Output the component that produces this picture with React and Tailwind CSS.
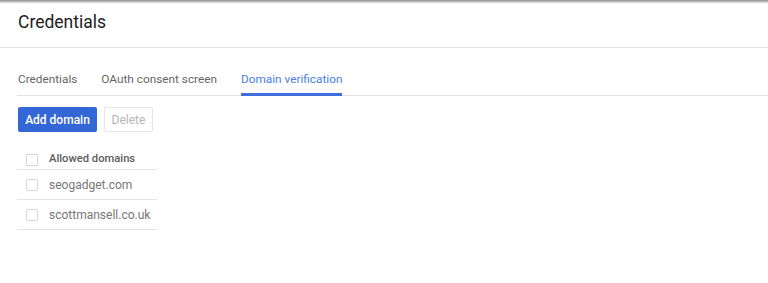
const Checkbox = () => (
  <span className="block w-[12px] h-[12px] border border-[#d9d9d9] rounded-[1px] bg-white" />
)

const Row = ({ children, header }) => (
  <div className={`flex items-center border-b border-[#e4e4e4] ${header ? 'h-[23px] pt-[3px]' : 'h-[30px]'}`}>
    <div className="w-[32px] pl-[9px]">
      <Checkbox />
    </div>
    <span className={header ? 'text-[11.2px] font-medium text-[#5c5c5c]' : 'text-[12px] text-[#777777]'}>{children}</span>
  </div>
)

export default function App() {
  const tabs = ['Credentials', 'OAuth consent screen', 'Domain verification']
  return (
    <div className="w-[768px] h-[283px] bg-white overflow-hidden" style={{ fontFamily: 'Roboto, "Liberation Sans", sans-serif' }}>
      <div className="h-[3px] bg-gradient-to-b from-[#8f8f8f] to-[#e6e6e6]" />
      <div className="h-[45px] flex items-center px-[18px] border-b border-[#e2e2e2]">
        <h1 className="text-[17.5px] text-[#222222] leading-none pb-[5px]">Credentials</h1>
      </div>

      <div className="ml-[17px] pt-[20px] flex gap-[24px] border-b border-[#e2e2e2]">
        {tabs.map((t, i) => (
          <div key={t}
            className={`h-[28px] flex items-start pt-[3px] text-[11.8px] -mb-px border-b-[3px] ${i === 0 ? 'ml-px' : ''} ${i === 2 ? 'text-[#4a7fe6] border-[#3f6fde]' : 'text-[#666666] border-transparent'}`}>
            {t}
          </div>
        ))}
      </div>

      <div className="px-[18px] pt-[11px] flex gap-[7px]">
        <button className="h-[25px] w-[79px] rounded-[2px] bg-[#3367d6] text-white text-[12px] font-medium">Add domain</button>
        <button className="h-[25px] w-[49px] rounded-[2px] border border-[#e6e6e6] text-[#b5b5b5] text-[12px]">Delete</button>
      </div>

      <div className="ml-[17px] mt-[15px] w-[140px]">
        <Row header>Allowed domains</Row>
        <Row>seogadget.com</Row>
        <Row>scottmansell.co.uk</Row>
      </div>
    </div>
  )
}
